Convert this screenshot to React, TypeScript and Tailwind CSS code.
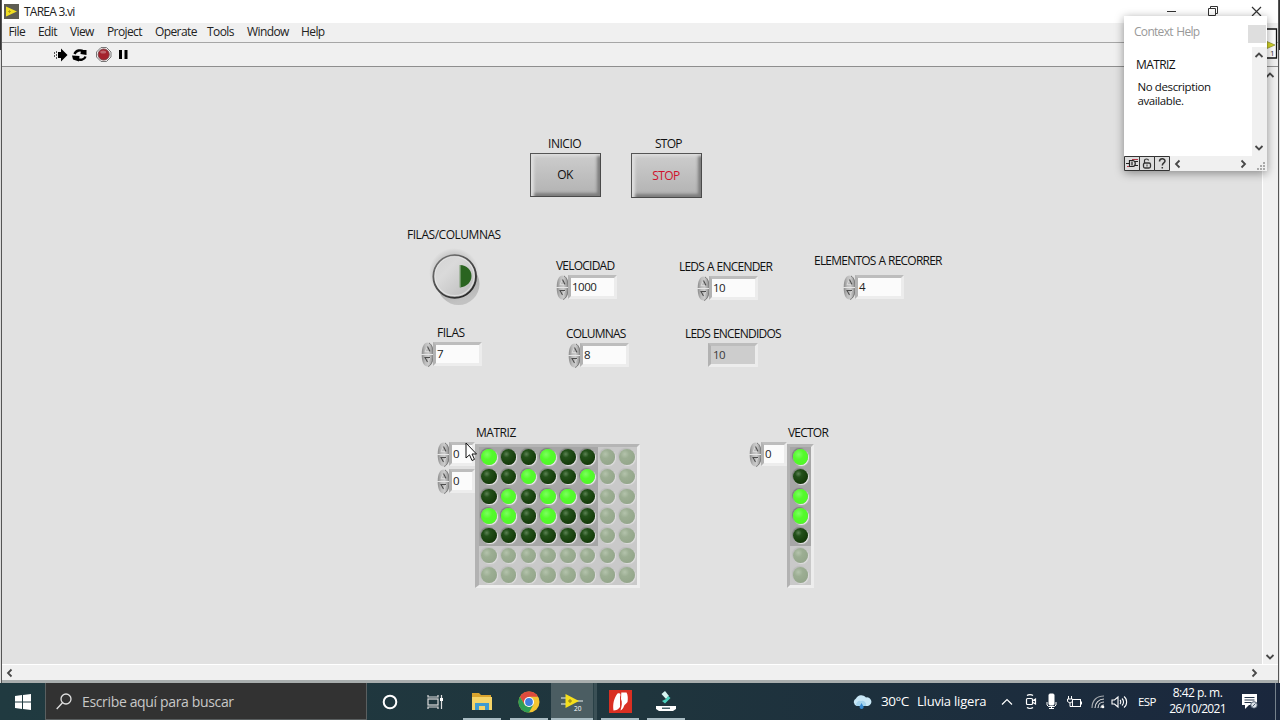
import type { ReactNode } from 'react';
import { cva } from 'class-variance-authority';
import clsx from 'clsx';

type LedState = 'on' | 'off' | 'idle';

const menuItems = [
  { label: 'File', width: 'w-[29.5px]' },
  { label: 'Edit', width: 'w-[32px]' },
  { label: 'View', width: 'w-[37px]' },
  { label: 'Project', width: 'w-[48px]' },
  { label: 'Operate', width: 'w-[52px]' },
  { label: 'Tools', width: 'w-[40px]' },
  { label: 'Window', width: 'w-[54px]' },
  { label: 'Help', width: 'w-[30px]' },
];

// 1 = lit, 0 = dark, . = element outside the array
const matrix = ['100100..', '001001..', '010110..', '110100..', '000000..', '........', '........'];
const vector = ['1', '0', '1', '1', '0', '.', '.'];

const toState = (c: string): LedState => (c === '1' ? 'on' : c === '0' ? 'off' : 'idle');

const led = cva('w-[15.5px] h-[15.5px] rounded-full', {
  variants: {
    state: {
      on: 'bg-[radial-gradient(circle_at_38%_34%,#7dff60_0%,#55fa2c_35%,#4ff826_75%,#38bd1c_100%)] shadow-[1px_1px_1px_#f0f0f0,-1px_-1px_1px_#7d7d7d]',
      off: 'bg-[radial-gradient(circle_at_36%_32%,#5c8254_0%,#23501a_24%,#173f0c_62%,#0d2506_100%)] shadow-[1px_1px_1px_#e8e8e8,-1px_-1px_1px_#858585]',
      idle: 'bg-[radial-gradient(circle_at_36%_32%,#b4c3ac_0%,#9cae93_30%,#95a78c_70%,#8c9c85_100%)] shadow-[1px_1px_1px_#dedede,-1px_-1px_1px_#bcbcbc]',
    },
  },
});

function LedCell({ state }: { state: LedState }) {
  return (
    <div className={clsx('flex items-center justify-center', state === 'idle' ? 'bg-[#c9c9c9]' : 'bg-[#a6a6a6]')}>
      <div className={led({ state })} />
    </div>
  );
}

function Label({ className, tight, children }: { className: string; tight?: boolean; children: ReactNode }) {
  return (
    <span
      className={clsx(
        'absolute whitespace-nowrap text-[12px] leading-[16px] text-[#111]',
        tight ? 'tracking-[-0.78px] [word-spacing:0.5px]' : 'tracking-[-0.47px]',
        className
      )}
    >
      {children}
    </span>
  );
}

function Spinner() {
  return (
    <svg width="13" height="25" viewBox="0 0 13 25" className="shrink-0">
      <defs>
        <linearGradient id="spin" x1="0" x2="1">
          <stop offset="0" stopColor="#8a8a8a" />
          <stop offset="0.3" stopColor="#bdbdbd" />
          <stop offset="0.6" stopColor="#cbcbcb" />
          <stop offset="1" stopColor="#8a8a8a" />
        </linearGradient>
      </defs>
      <path d="M.700 12C.700 5 3 .500 6.500 .500S12.300 5 12.300 12Z" fill="url(#spin)" />
      <path d="M.700 13C.700 20 3 24.500 6.500 24.500S12.300 20 12.300 13Z" fill="url(#spin)" />
      <path d="M8 1C11 2.500 12.300 7 12.300 12.500C12.300 18 10.500 23.500 7 24.500" fill="none" stroke="#6a6a6a" strokeWidth=".8" />
      <path d="M1 12.500H12" stroke="#e6e6e6" />
      <path d="M4 9.500H9L6.500 4.500Z" fill="#bbb" stroke="#ddd" strokeWidth=".8" />
      <path d="M6.500 4.500L9 9.500" fill="none" stroke="#4c4c4c" strokeWidth="1.100" />
      <path d="M4 15.500H9L6.500 20Z" fill="#bbb" stroke="#ddd" strokeWidth=".8" />
      <path d="M9 15.500H4L6.500 20" fill="none" stroke="#4c4c4c" strokeWidth="1.100" />
    </svg>
  );
}

function NumericBox({ value, width, dim }: { value: string; width: string; dim?: boolean }) {
  return (
    <div
      className={clsx(
        'h-[24px] border-[3px] border-t-[#bdbdbd] border-l-[#b2b2b2] border-r-[#ececec] border-b-[#ededed] text-[11.5px] leading-[18px] tracking-[-0.5px]',
        width,
        dim ? 'bg-[#cdcdcd] pl-[2px] text-[#3a3a3a]' : 'bg-[#fbfbfb] pl-px text-[#222]'
      )}
    >
      {value}
    </div>
  );
}

function NumericControl({ className, value, width = 'w-[49px]' }: { className: string; value: string; width?: string }) {
  return (
    <div className={clsx('absolute flex items-start', className)}>
      <Spinner />
      <div className="-ml-px">
        <NumericBox value={value} width={width} />
      </div>
    </div>
  );
}

function PanelButton({ className, children }: { className: string; children: ReactNode }) {
  return (
    <button
      className={clsx('absolute w-[71px] border border-t-[#555] border-l-[#555] border-r-[#4a4a4a] border-b-[#4a4a4a] text-[12px] tracking-[-0.6px]', className)}
    >
      <span className="flex h-full w-full items-center justify-center bg-linear-to-b from-[#cdcdcd] to-[#b2b2b2] pr-px shadow-[inset_4px_3px_3px_-1px_#dedede,inset_-4px_-4px_3px_-1px_#7d7d7d]">
        {children}
      </span>
    </button>
  );
}

function RoundButton() {
  return (
    <svg width="54" height="60" viewBox="0 0 54 60" className="absolute left-[427px] top-[180px]">
      <defs>
        <linearGradient id="cap" x1="0" y1="0" x2="1" y2="1">
          <stop offset="0" stopColor="#d2d2d2" />
          <stop offset=".35" stopColor="#dadada" />
          <stop offset="1" stopColor="#b8b8b8" />
        </linearGradient>
        <radialGradient id="halo">
          <stop offset=".75" stopColor="#c9c9c9" />
          <stop offset="1" stopColor="#e1e1e1" />
        </radialGradient>
        <linearGradient id="shade" x1="0" y1="0" x2=".3" y2="1">
          <stop offset=".5" stopColor="#aaaaaa" />
          <stop offset="1" stopColor="#c2c2c2" />
        </linearGradient>
        <linearGradient id="rim" x1="0" y1="0" x2=".8" y2="1">
          <stop offset="0" stopColor="#777" />
          <stop offset="1" stopColor="#262626" />
        </linearGradient>
      </defs>
      <circle cx="25" cy="26" r="25" fill="url(#halo)" />
      <circle cx="29.500" cy="37" r="21" fill="url(#shade)" />
      <circle cx="25.700" cy="29.500" r="21.300" fill="url(#cap)" stroke="url(#rim)" strokeWidth="1.900" />
      <circle cx="25.500" cy="29" r="19.600" fill="none" stroke="#eee" strokeWidth="1.100" opacity=".6" />
      <path d="M31 18C38 18.500 42.500 23 42.500 29S38 39.500 31 40.500Z" fill="#2a6420" />
      <path d="M31 18V40.500" stroke="#8eaa87" strokeWidth="1.300" />
    </svg>
  );
}

function Chevron({ d, className }: { d: string; className?: string }) {
  return (
    <svg width="10" height="10" viewBox="0 0 10 10" className={className} fill="none" stroke="#484848" strokeWidth="1.800">
      <path d={d} />
    </svg>
  );
}

const up = 'M1.500 7L5 3.500L8.500 7';
const down = 'M1.500 3L5 6.500L8.500 3';
const left = 'M6.500 1.500L3 5L6.500 8.500';
const right = 'M3.500 1.500L7 5L3.500 8.500';

function TitleBar() {
  return (
    <div className="flex h-[23px] items-center bg-white pl-[2px]">
      <svg width="15" height="15" viewBox="0 0 15 15">
        <rect width="15" height="15" fill="#5d5c52" />
        <path d="M2 2.500L13 7.500L2 12.500Z" fill="#f0de23" />
        <path d="M4 7.500H7M5.500 6V9" stroke="#a99516" strokeWidth=".8" />
      </svg>
      <span className="ml-[5px] pt-px text-[12px] tracking-[-0.75px] text-[#222]">TAREA 3.vi</span>
      <svg width="96" height="20" viewBox="0 0 96 20" className="mb-[2px] ml-auto mr-[15px]" fill="none" stroke="#333">
        <path d="M0 10.500H9" />
        <path d="M41.500 7.500H48.500V14.500H41.500ZM43.500 7V5.500H50.500V12.500H49" />
        <path d="M85 6L94 15M94 6L85 15" strokeWidth="1.200" />
      </svg>
    </div>
  );
}

function Toolbar() {
  return (
    <div className="flex h-[25px] items-center border-y border-t-[#a6a6a6] border-b-[#8e8e8e] bg-[#f0f0f0] pl-[50px]">
      <svg width="80" height="17" viewBox="0 0 80 17">
        {/* run */}
        <path d="M2.500 6V12M4.500 5V13" stroke="#555" strokeDasharray="2 1" />
        <path d="M6 6H9V2.500L15.500 9L9 15.500V12H6Z" fill="#000" />
        {/* run continuously */}
        <path d="M22.500 8C24 4 29 3.500 31.500 5.500M33.500 10.500C32.500 14 28 14.500 25.500 13" fill="none" stroke="#000" strokeWidth="2.400" />
        <path d="M29 4L34.500 4L34.500 9L28.500 8ZM27 15.500L21 13.500L20 9.500L27.500 10Z" fill="#000" />
        {/* abort */}
        <path d="M49 1.500H54.500L59 6V11L54.500 15.500H49L44.500 11V6Z" fill="#eee" stroke="#777" />
        <circle cx="51.700" cy="8.500" r="5.500" fill="#a5222d" stroke="#7d4247" />
        <ellipse cx="51.200" cy="6" rx="3" ry="1.600" fill="#c98088" opacity=".7" />
        {/* pause */}
        <path d="M67 4H70V13H67ZM72.500 4H75.500V13H72.500Z" fill="#000" />
      </svg>
    </div>
  );
}

function FrontPanel() {
  return (
    <div className="relative flex-1 bg-[#e1e1e1]">
      <Label className="left-[546px] top-[69px]">INICIO</Label>
      <PanelButton className="left-[528px] top-[86px] h-[44px] text-[#111]">OK</PanelButton>
      <Label className="left-[653px] top-[69px]" tight>STOP</Label>
      <PanelButton className="left-[629px] top-[86px] h-[45px] text-[#d0102c]">STOP</PanelButton>

      <Label className="left-[405px] top-[160px]">FILAS/COLUMNAS</Label>
      <RoundButton />
      <Label className="left-[554px] top-[191px]" tight>VELOCIDAD</Label>
      <NumericControl className="left-[554px] top-[208px]" value="1000" />
      <Label className="left-[677px] top-[192px]" tight>LEDS A ENCENDER</Label>
      <NumericControl className="left-[695px] top-[209px]" value="10" />
      <Label className="left-[812px] top-[186px]" tight>ELEMENTOS A RECORRER</Label>
      <NumericControl className="left-[841px] top-[208px]" value="4" />

      <Label className="left-[435px] top-[258px]">FILAS</Label>
      <NumericControl className="left-[419px] top-[275px]" value="7" />
      <Label className="left-[564px] top-[259px]" tight>COLUMNAS</Label>
      <NumericControl className="left-[566px] top-[276px]" value="8" />
      <Label className="left-[683px] top-[259px]" tight>LEDS ENCENDIDOS</Label>
      <div className="absolute left-[706px] top-[276px]">
        <NumericBox value="10" width="w-[50px]" dim />
      </div>

      <Label className="left-[474px] top-[358px]">MATRIZ</Label>
      <NumericControl className="left-[435px] top-[375px]" value="0" width="w-[26px]" />
      <NumericControl className="left-[435px] top-[402px]" value="0" width="w-[26px]" />
      <div className="absolute left-[473px] top-[377px] grid h-[144px] w-[165px] grid-cols-8 grid-rows-7 border-[3px] border-l-4 border-t-[#b5b5b5] border-l-[#b2b2b2] border-r-[#ededed] border-b-[#eeeeee]">
        {matrix.flatMap((row, r) => row.split('').map((c, i) => <LedCell key={`${r}-${i}`} state={toState(c)} />))}
      </div>

      <Label className="left-[786px] top-[358px]" tight>VECTOR</Label>
      <NumericControl className="left-[747px] top-[375px]" value="0" width="w-[26px]" />
      <div className="absolute left-[785px] top-[377px] grid h-[144px] w-[27px] grid-rows-7 border-[3px] border-t-[#b5b5b5] border-l-[#b2b2b2] border-r-[#ededed] border-b-[#eeeeee]">
        {vector.map((c, i) => (
          <LedCell key={i} state={toState(c)} />
        ))}
      </div>

      <svg width="14" height="20" viewBox="0 0 14 20" className="absolute left-[463px] top-[375px]">
        <path d="M1 1V16L4.500 12.800L7 18.500L9.500 17.400L7 12H11.500Z" fill="#fff" stroke="#111" />
      </svg>
    </div>
  );
}

function ContextHelp() {
  return (
    <div className="absolute left-[1124px] top-[16px] flex h-[155px] w-[143px] flex-col bg-white shadow-[0_2px_9px_rgba(0,0,0,0.4)]">
      <div className="flex h-[31px] justify-between pl-[10px]">
        <span className="pt-[7px] text-[12px] leading-[17px] tracking-[-0.7px] text-[#999] [word-spacing:1px]">Context Help</span>
        <div className="mt-[9px] mr-px h-[18px] w-[18px] bg-[#dedede]" />
      </div>
      <div className="flex flex-1">
        <div className="flex-1 pl-[12px] text-[12px] text-[#111]">
          <p className="pt-[10px] leading-[16px] tracking-[-0.6px]">MATRIZ</p>
          <p className="mt-[7px] pl-[1.500px] text-[11.5px] leading-[14px] tracking-[-0.4px]">
            No description
            <br />
            available.
          </p>
        </div>
        <div className="flex w-[15px] flex-col items-start justify-between bg-[#f0f0f0] pt-[3px] pb-[3px] pl-[1.5px]">
          <Chevron d={up} />
          <Chevron d={down} />
        </div>
      </div>
      <div className="flex h-[15px] items-center bg-[#f0f0f0]">
        <svg width="46" height="15" viewBox="0 0 46 15" fill="none" stroke="#333">
          <path d="M.5.500H15.500V14.500H.5ZM15.500.500H30.500V14.500H15.500ZM30.500.500H45.500V14.500H30.500Z" fill="#ddd" />
          <path d="M2 7.500H5M11 5.500H14M11 9.500H14" stroke="#222" />
          <path d="M5.500 4.500H9C12 5 12 10 9 10.500H5.500ZM8 5.500V9.500" stroke="#222" strokeWidth="1.200" />
          <path d="M8 3.500H14M3 10.500H5" stroke="#b23a4a" />
          <path d="M20.500 7V4.500C20.500 2.500 24.500 2.500 24.500 4.500" strokeWidth="1.200" />
          <rect x="19.500" y="7" width="7" height="5" rx="1.500" strokeWidth="1.300" />
          <path d="M23 8.500V10.500" />
          <path d="M35.500 5.500C35.500 2 41 2 41 5C41 7 38.300 6.800 38.300 9.500M38.300 11V12.500" strokeWidth="1.500" />
        </svg>
        <Chevron d={left} className="ml-[3px]" />
        <Chevron d={right} className="ml-[55px]" />
        <svg width="8" height="8" viewBox="0 0 8 8" className="ml-[9px] mt-[5px]" fill="#aaa">
          <path d="M6 0H8V2H6ZM3 3H5V5H3ZM6 3H8V5H6ZM0 6H2V8H0ZM3 6H5V8H3ZM6 6H8V8H6Z" />
        </svg>
      </div>
    </div>
  );
}

function TaskButton({ width, active, running, children }: { width: string; active?: boolean; running?: boolean; children: ReactNode }) {
  return (
    <div className={clsx('relative flex h-full items-center justify-center', width, active && 'bg-[#4b5d62]')}>
      {children}
      {running && <div className={clsx('absolute bottom-0 h-[2px] bg-[#a9bcc3]', active ? 'w-full' : 'w-[38px]')} />}
    </div>
  );
}

function Taskbar() {
  return (
    <div className="flex h-[37px] bg-linear-to-r from-[#203a40] via-[#1f353d] to-[#1a273d] text-white">
      <div className="flex w-[45px] items-center justify-center">
        <svg width="16" height="16" viewBox="0 0 16 16" fill="#fff">
          <path d="M0 2L7 1V7.500H0ZM8 .9L16 0V7.500H8ZM0 8.500H7V15L0 14ZM8 8.500H16V16L8 15Z" />
        </svg>
      </div>
      <div className="flex w-[322px] items-center border border-t-0 border-[#5a5f60] bg-[#323232] pl-[10px]">
        <svg width="16" height="17" viewBox="0 0 16 17" fill="none" stroke="#e0e0e0" strokeWidth="1.300">
          <circle cx="10" cy="6" r="5" />
          <path d="M6.500 9.800L.7 16" />
        </svg>
        <span className="ml-[10px] text-[14px] tracking-[-0.35px] text-[#c8c8c8]">Escribe aquí para buscar</span>
      </div>

      <TaskButton width="w-[45px]">
        <svg width="16" height="16" viewBox="0 0 16 16" fill="none" stroke="#fff" strokeWidth="2">
          <circle cx="8" cy="8" r="6.300" />
        </svg>
      </TaskButton>
      <TaskButton width="w-[46px]">
        <svg width="17" height="16" viewBox="0 0 17 16" fill="none" stroke="#ddd" strokeWidth="1.200">
          <path d="M1 1V3H11V1M1 15V13H11V15M14.500 1V15" />
          <rect x="1" y="5" width="10" height="6" />
          <rect x="13" y="4" width="3" height="3" fill="#fff" stroke="none" />
        </svg>
      </TaskButton>
      <TaskButton width="w-[48px]" running>
        <svg width="22" height="19" viewBox="0 0 22 19">
          <path d="M1 1H8L10 3H20V6H1Z" fill="#d9a42e" />
          <path d="M1 5H21V18H1Z" fill="#f5d468" />
          <path d="M4 18V11H18V18H14V14H8V18Z" fill="#3f9bd0" />
        </svg>
      </TaskButton>
      <TaskButton width="w-[45px]" running>
        <svg width="22" height="22" viewBox="0 0 22 22">
          <circle cx="11" cy="11" r="10.500" fill="#f3c531" />
          <path d="M1.900 5.750A10.500 10.500 0 0 1 20.100 5.750H11L6.500 13.600Z" fill="#dd4b3e" />
          <path d="M1.900 5.750A10.500 10.500 0 0 0 11 21.500L15.600 13.600L11 16L6.500 13.600Z" fill="#2f9e55" />
          <circle cx="11" cy="11" r="5" fill="#fff" />
          <circle cx="11" cy="11" r="3.900" fill="#3f7fe0" />
        </svg>
      </TaskButton>
      <TaskButton width="w-[42px]" active running>
        <svg width="24" height="20" viewBox="0 0 24 20">
          <path d="M1 6H7M1 12H7M17 9H23" stroke="#b8c0c0" strokeWidth="1.300" />
          <path d="M5.500 2L19 9L5.500 16Z" fill="#f6df1c" />
          <path d="M8 9H12M10 7V11" stroke="#8e7d14" />
          <text x="14" y="18.500" fontSize="6.500" fill="#fff">20</text>
        </svg>
      </TaskButton>
      <div className="h-full w-[4px] border-l border-[#2a4147] bg-[#3b5056]" />
      <TaskButton width="w-[46px]" running>
        <svg width="23" height="23" viewBox="0 0 23 23">
          <rect width="23" height="23" fill="#d92f22" />
          <path d="M4.500 20.500C3.500 14 5 8 8.500 3.500C11.500 2.500 12 4 11 7V17C9.500 19.500 7 20.500 4.500 20.500Z" fill="#fff" />
          <path d="M12.300 2.500H17.500C19 5 19 9 18.500 12C17 14 15.500 14.500 15 16C14.500 18 13 19.500 11.500 20.500C12.800 16 13.500 12 12 9Z" fill="#fff" />
        </svg>
      </TaskButton>
      <TaskButton width="w-[46px]" running>
        <svg width="20" height="22" viewBox="0 0 20 22">
          <path d="M5.500 3L9 0L13 5L10 8Z" fill="#d8f5f2" />
          <path d="M10 8L12 5L14.500 7L9 12.500L6 10Z" fill="#4bd0bd" />
          <path d="M0 15H20V18L17 20H3L0 18Z" fill="#fff" />
          <path d="M6 16.500H14V18H6Z" fill="#48636a" />
        </svg>
      </TaskButton>

      <div className="ml-auto flex items-center">
        <svg width="20" height="16" viewBox="0 0 20 16">
          <path d="M5 12A4 4 0 0 1 4 4.500A6 6 0 0 1 14 3.500A4.300 4.300 0 0 1 16 12Z" fill="#c8e7f6" />
          <path d="M4 11.500A4 4 0 0 1 9 7A4 4 0 0 1 14 12H5Z" fill="#a5d4ee" />
          <path d="M9.500 9L11.500 12.500A2 2 0 1 1 7.700 12.500Z" fill="#3588cf" />
        </svg>
        <span className="ml-[9px] w-[36px] whitespace-nowrap text-[13.500px] tracking-[-0.45px]">30°C</span>
        <span className="w-[84px] whitespace-nowrap text-[13px] tracking-[-0.2px]">Lluvia ligera</span>
        <svg width="12" height="8" viewBox="0 0 12 8" fill="none" stroke="#fff" strokeWidth="1.200">
          <path d="M1 6.500L6 1.500L11 6.500" />
        </svg>
        <svg width="12" height="17" viewBox="0 0 12 17" className="ml-[12px]" fill="none" stroke="#fff" strokeWidth="1.200">
          <rect x="1.500" y="5.500" width="6" height="6" rx="1" />
          <path d="M8 7.500L10.500 6V11L8 9.500M2 2.500C3.500 1.200 6.500 1.200 8 2.500M2 14.500C3.500 15.800 6.500 15.800 8 14.500" />
        </svg>
        <svg width="11" height="17" viewBox="0 0 11 17" className="ml-[9px]" fill="none" stroke="#fff">
          <rect x="3" y="1" width="5" height="11" rx="1" fill="#fff" />
          <path d="M1 9V12L2.500 13.500H8.500L10 12V9M5.500 13V15.500M3 15.500H8" />
        </svg>
        <svg width="17" height="14" viewBox="0 0 17 14" className="ml-[9px]" fill="none" stroke="#fff">
          <rect x="6.500" y="4.500" width="8" height="7" />
          <path d="M15.500 6.500V9.500M2.500 1V4M5.500 1V4M1.500 4H6.500V6.500L4 8L1.500 6.500ZM4 8V11.500H6.500" />
        </svg>
        <svg width="14" height="15" viewBox="0 0 14 15" className="ml-[8px]" fill="none" stroke="#ddd" strokeWidth="1.100">
          <path d="M1 14C1 6 6 2 13 2" opacity=".7" />
          <path d="M4 14C4 9 8 5 13 5M7 14C7 10.500 9.500 8 13 8M10 14C10 12 11 11 13 11" />
          <circle cx="12" cy="13" r="1.300" fill="#fff" stroke="none" />
        </svg>
        <svg width="17" height="14" viewBox="0 0 17 14" className="ml-[6px]" fill="none" stroke="#fff" strokeWidth="1.100">
          <path d="M1 5H3.500L7 2V12L3.500 9H1ZM9 5C10 6 10 8 9 9M11 3.500C13 5.500 13 8.500 11 10.500M13 1.500C16.500 4 16.500 10 13 12.500" />
        </svg>
        <span className="ml-[10px] w-[24px] whitespace-nowrap text-[11.500px] tracking-[-0.6px]">ESP</span>
        <div className="flex w-[67px] flex-col items-center pb-px pl-[4px] text-[12px] leading-[16.5px] tracking-[-0.7px] whitespace-nowrap">
          <span className="tracking-[-0.5px]">8:42 p. m.</span>
          <span>26/10/2021</span>
        </div>
        <svg width="17" height="17" viewBox="0 0 17 17" className="ml-[12px] mr-[17px]">
          <path d="M1 1H16V12H8L4 16V12H1Z" fill="#fff" />
          <path d="M3.500 4.500H13.500M3.500 7H13.500M3.500 9.500H10" stroke="#26364b" />
          <circle cx="13" cy="12" r="3.300" fill="#dbe2e8" stroke="#26364b" strokeWidth=".8" />
          <path d="M11.500 13.500L14.500 10.500" stroke="#26364b" strokeWidth=".8" />
        </svg>
        <div className="h-[37px] w-[5px] border-l border-[#75818b]" />
      </div>
    </div>
  );
}

export default function App() {
  return (
    <div className="relative flex h-[720px] w-[1280px] flex-col overflow-hidden font-['Open_Sans','Noto_Sans',sans-serif]">
      <div className="flex h-[683px]">
        <div className="w-[2px] border-r border-[#555] bg-[#dcdcdc]">
          <div className="h-[50px] bg-[#333]" />
        </div>
        <div className="flex w-[1276px] flex-col border-b-[3px] border-[#a9aeae] bg-[#f0f0f0]">
          <TitleBar />
          <div className="flex h-[19px] shrink-0 items-start pl-[6.500px] text-[12px] leading-[17px] tracking-[-0.6px] text-[#222]">
            {menuItems.map((item) => (
              <span key={item.label} className={clsx('whitespace-nowrap', item.width)}>
                {item.label}
              </span>
            ))}
          </div>
          <Toolbar />
          <div className="flex flex-1">
            <FrontPanel />
            <div className="flex w-[16px] flex-col items-start justify-between border-l border-white bg-[#f0f0f0] pt-[3px] pb-[2px] pl-[1.500px]">
              <Chevron d={up} />
              <Chevron d={down} />
            </div>
          </div>
          <div className="flex h-[16px] items-center justify-between border-t border-white bg-[#f0f0f0] pl-[3px] pr-[19px]">
            <Chevron d={left} />
            <Chevron d={right} />
          </div>
        </div>
        <div className="w-[2px] border-l border-[#555] bg-[#e4e4e4]">
          <div className="h-[50px] bg-[#333]" />
        </div>
      </div>
      <Taskbar />

      {/* connector pane icon, partly hidden by the help window */}
      <svg width="12" height="31" viewBox="0 0 12 31" className="absolute left-[1266px] top-[28px]">
        <path d="M0 1H10.500V30H0" fill="#fff" stroke="#111" strokeWidth="1.300" />
        <path d="M1 13.500L9 17L1 20.500Z" fill="#d8d928" stroke="#777b24" strokeWidth=".6" />
        <text x="4" y="28" fontSize="8" fill="#333">1</text>
      </svg>
      <ContextHelp />
    </div>
  );
}
